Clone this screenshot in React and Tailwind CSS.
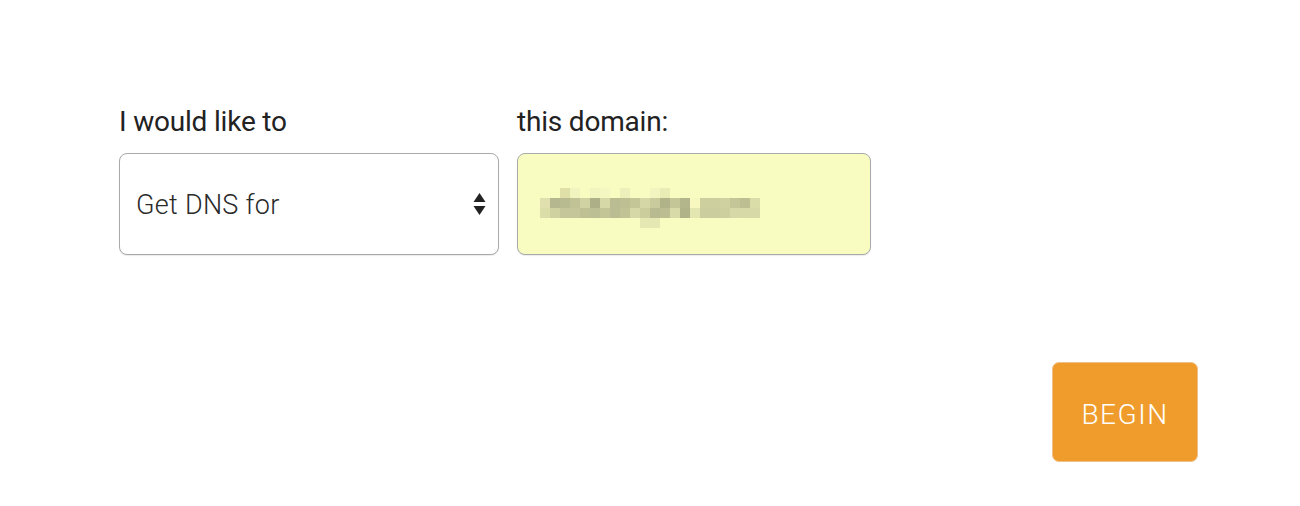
import React from "react";

const rows = [
  [null, null, "bg-[#dfe0a8]", "bg-[#f2f4c0]", null, "bg-[#f2f4c0]", "bg-[#f5f7c2]", null, "bg-[#eef0bb]", null, null, "bg-[#f3f5c0]", "bg-[#eaecb6]", null, null, null, null, null, null, null, null, null],
  ["bg-[#dfe0ae]", "bg-[#b5b78e]", "bg-[#b8ba90]", "bg-[#c1c397]", "bg-[#d0d2a3]", "bg-[#adaf87]", "bg-[#d6d8a7]", "bg-[#babc91]", "bg-[#bec093]", "bg-[#c4c698]", "bg-[#d5d7a6]", "bg-[#c9cb9c]", "bg-[#b0b288]", "bg-[#c4c697]", "bg-[#b3b58b]", "bg-[#f6f8c0]", "bg-[#cdcf9f]", "bg-[#cdcf9f]", "bg-[#cfd1a1]", "bg-[#c4c698]", "bg-[#bdbf93]", "bg-[#dbdda9]"],
  ["bg-[#dcdea9]", "bg-[#cfd1a0]", "bg-[#c5c79a]", "bg-[#c5c79a]", "bg-[#bfc195]", "bg-[#bcbe93]", "bg-[#c3c597]", "bg-[#babc91]", "bg-[#c1c395]", "bg-[#d6d8a7]", "bg-[#cbcd9d]", "bg-[#b8ba90]", "bg-[#bcbe92]", "bg-[#d8daa8]", "bg-[#b0b288]", "bg-[#e4e6b2]", "bg-[#cbcd9e]", "bg-[#cbcd9e]", "bg-[#cdcf9f]", "bg-[#d6d8a7]", "bg-[#d7d9a7]", "bg-[#d7d9a7]"],
  [null, null, null, null, null, null, null, null, null, null, "bg-[#e6e8b4]", "bg-[#e6e8b4]", null, null, null, null, null, null, null, null, null, null],
];

function Pixelated() {
  return (
    <div className="flex flex-col">
      {rows.map((r, i) => (
        <div key={i} className="flex">
          {r.map((c, j) => (
            <div key={j} className={"w-[10px] h-[10px] " + (c || "")} />
          ))}
        </div>
      ))}
    </div>
  );
}

export default function App() {
  return (
    <div
      className="w-[1300px] h-[506px] bg-white pt-[106px] pl-[119px] pr-[102px]"
      style={{ fontFamily: "Roboto, 'Liberation Sans', sans-serif" }}
    >
      <div className="flex gap-[18px]">
        <div className="flex flex-col">
          <div className="text-[28px] leading-[32px] text-[#222] tracking-[-0.2px]">I would like to</div>
          <div className="mt-[15px] w-[380px] h-[102px] rounded-[8px] border border-[#a9a9a9] bg-white flex items-center justify-between pl-[16px] pr-[12px] shadow-[0_1px_1px_rgba(0,0,0,0.08)]">
            <span className="text-[27px] leading-[32px] font-light text-[#2a2a2a] tracking-[0.3px] mt-[1px]">Get DNS for</span>
            <svg width="13" height="24" viewBox="0 0 13 24" className="mt-[2px]">
              <polygon points="6.5,0 12.5,9 0.5,9" fill="#222" />
              <polygon points="0.5,13 12.5,13 6.5,22" fill="#222" />
            </svg>
          </div>
        </div>
        <div className="flex flex-col">
          <div className="text-[28px] leading-[32px] text-[#222] tracking-[-0.2px]">this domain:</div>
          <div className="mt-[15px] w-[354px] h-[102px] rounded-[8px] border border-[#a9a9a9] bg-[#f8fcc1] flex items-center pl-[22px] shadow-[0_1px_1px_rgba(0,0,0,0.08)]">
            <div className="mt-[8px]">
              <Pixelated />
            </div>
          </div>
        </div>
      </div>
      <div className="flex justify-end mt-[107px]">
        <button className="w-[146px] h-[100px] rounded-[7px] bg-[#f09c2c] border border-[#eec08a] text-white text-[28px] font-light tracking-[1.5px] flex items-center justify-center pt-[5px]">
          BEGIN
        </button>
      </div>
    </div>
  );
}
